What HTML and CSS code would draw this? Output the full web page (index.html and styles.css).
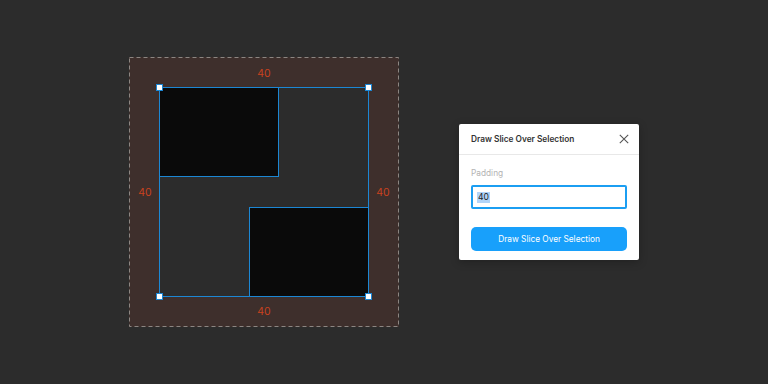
FILE: index.html
```html
<!DOCTYPE html>
<html lang="en">
<head>
<meta charset="utf-8">
<title>Draw Slice Over Selection</title>
<link rel="stylesheet" href="styles.css">
</head>
<body>
<main class="stage">
  <svg class="canvas" width="270" height="270" viewBox="0 0 270 270">
    <rect x="0" y="0" width="270" height="270" fill="#3e2f2c"/>
    <rect x="0.5" y="0.5" width="269" height="269" fill="none" stroke="#8c8682" stroke-width="1" stroke-dasharray="4 3"/>
    <rect x="30" y="30" width="210" height="210" fill="#2c2c2c"/>
    <rect x="30.5" y="30.5" width="119" height="89" fill="#0a0a0a" stroke="#1c87d4" stroke-width="1"/>
    <rect x="120.5" y="150.5" width="119" height="89" fill="#0a0a0a" stroke="#1c87d4" stroke-width="1"/>
    <rect x="30.5" y="30.5" width="209" height="209" fill="none" stroke="#1c87d4" stroke-width="1"/>
    <g fill="#ffffff" stroke="#1c87d4" stroke-width="1">
      <rect x="27.5" y="27.5" width="6" height="6"/>
      <rect x="236.5" y="27.5" width="6" height="6"/>
      <rect x="27.5" y="236.5" width="6" height="6"/>
      <rect x="236.5" y="236.5" width="6" height="6"/>
    </g>
    <g class="lbl" text-anchor="middle">
      <text x="135" y="20">40</text>
      <text x="16" y="139">40</text>
      <text x="254" y="139">40</text>
      <text x="135" y="258">40</text>
    </g>
  </svg>
  <section class="dialog">
    <header class="dlg-head">
      <span class="dlg-title">Draw Slice Over Selection</span>
      <svg class="close" width="10" height="10" viewBox="0 0 10 10">
        <path d="M0.8 0.8 L9.2 9.2 M9.2 0.8 L0.8 9.2" stroke="#555" stroke-width="1.1" fill="none"/>
      </svg>
    </header>
    <div class="dlg-body">
      <label class="field-label">Padding</label>
      <div class="input"><span class="sel">40</span></div>
      <button class="btn">Draw Slice Over Selection</button>
    </div>
  </section>
</main>
</body>
</html>
```
FILE: styles.css
```css
html, body {
  margin: 0;
  padding: 0;
  background: #2c2c2c;
  width: 768px;
  height: 384px;
  overflow: hidden;
  font-family: Inter, "Noto Sans", sans-serif;
}
.stage {
  display: flex;
  align-items: flex-start;
  padding: 57px 0 0 129px;
  gap: 60px;
}
.canvas {
  display: block;
  flex: none;
}
.lbl text {
  font-family: Inter, "Noto Sans", sans-serif;
  font-size: 10.5px;
  fill: #c8421f;
}
.dialog {
  margin-top: 67px;
  width: 180px;
  height: 136px;
  background: #ffffff;
  border-radius: 2px;
  box-shadow: 0 2px 8px rgba(0,0,0,0.25);
  display: flex;
  flex-direction: column;
}
.dlg-head {
  height: 31px;
  box-sizing: border-box;
  border-bottom: 1px solid #e8e8e8;
  display: flex;
  align-items: center;
  justify-content: space-between;
  padding: 0 10px 0 12px;
}
.dlg-title {
  font-size: 8.3px;
  font-weight: 600;
  color: #333;
}
.close {
  display: block;
}
.dlg-body {
  padding: 12px 12px 0 12px;
  display: flex;
  flex-direction: column;
}
.field-label {
  font-size: 8.3px;
  line-height: 12px;
  color: #b3b3b3;
  height: 12px;
}
.input {
  margin-top: 6px;
  height: 24px;
  box-sizing: border-box;
  border: 2px solid #1b9ef2;
  border-radius: 2px;
  display: flex;
  align-items: center;
  padding-left: 4px;
  font-size: 8.6px;
  color: #222;
}
.sel {
  background: #b2d4f8;
  padding: 0 1px;
  line-height: 11px;
}
.btn {
  margin-top: 18px;
  height: 24px;
  border: none;
  border-radius: 5px;
  background: #18a0fb;
  color: #ffffff;
  font-family: Inter, "Noto Sans", sans-serif;
  font-size: 8.3px;
  padding: 0;
}
```
